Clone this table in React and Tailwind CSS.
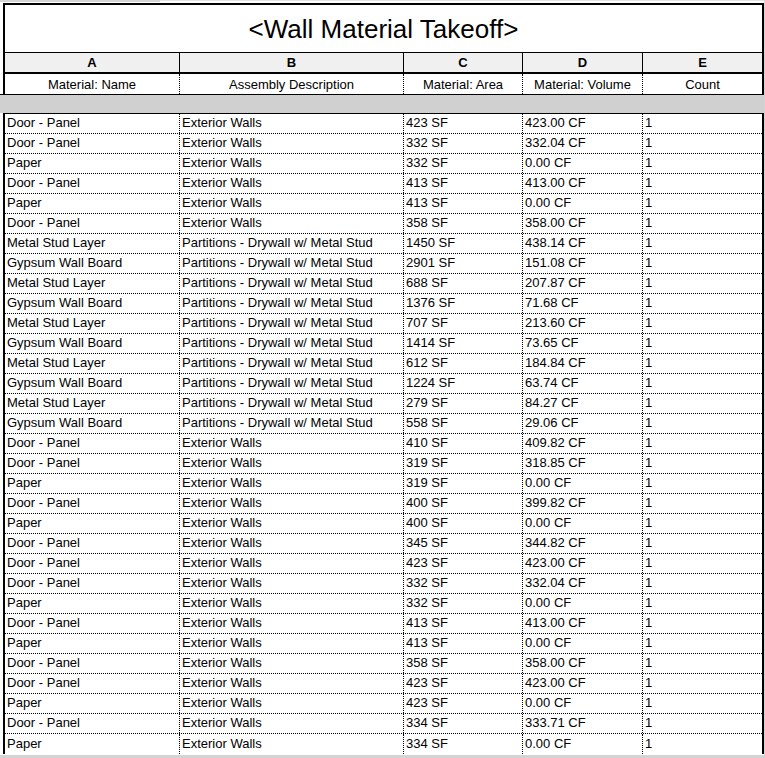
const rows = [
  ["Door - Panel", "Exterior Walls", "423 SF", "423.00 CF"],
  ["Door - Panel", "Exterior Walls", "332 SF", "332.04 CF"],
  ["Paper", "Exterior Walls", "332 SF", "0.00 CF"],
  ["Door - Panel", "Exterior Walls", "413 SF", "413.00 CF"],
  ["Paper", "Exterior Walls", "413 SF", "0.00 CF"],
  ["Door - Panel", "Exterior Walls", "358 SF", "358.00 CF"],
  ["Metal Stud Layer", "Partitions - Drywall w/ Metal Stud", "1450 SF", "438.14 CF"],
  ["Gypsum Wall Board", "Partitions - Drywall w/ Metal Stud", "2901 SF", "151.08 CF"],
  ["Metal Stud Layer", "Partitions - Drywall w/ Metal Stud", "688 SF", "207.87 CF"],
  ["Gypsum Wall Board", "Partitions - Drywall w/ Metal Stud", "1376 SF", "71.68 CF"],
  ["Metal Stud Layer", "Partitions - Drywall w/ Metal Stud", "707 SF", "213.60 CF"],
  ["Gypsum Wall Board", "Partitions - Drywall w/ Metal Stud", "1414 SF", "73.65 CF"],
  ["Metal Stud Layer", "Partitions - Drywall w/ Metal Stud", "612 SF", "184.84 CF"],
  ["Gypsum Wall Board", "Partitions - Drywall w/ Metal Stud", "1224 SF", "63.74 CF"],
  ["Metal Stud Layer", "Partitions - Drywall w/ Metal Stud", "279 SF", "84.27 CF"],
  ["Gypsum Wall Board", "Partitions - Drywall w/ Metal Stud", "558 SF", "29.06 CF"],
  ["Door - Panel", "Exterior Walls", "410 SF", "409.82 CF"],
  ["Door - Panel", "Exterior Walls", "319 SF", "318.85 CF"],
  ["Paper", "Exterior Walls", "319 SF", "0.00 CF"],
  ["Door - Panel", "Exterior Walls", "400 SF", "399.82 CF"],
  ["Paper", "Exterior Walls", "400 SF", "0.00 CF"],
  ["Door - Panel", "Exterior Walls", "345 SF", "344.82 CF"],
  ["Door - Panel", "Exterior Walls", "423 SF", "423.00 CF"],
  ["Door - Panel", "Exterior Walls", "332 SF", "332.04 CF"],
  ["Paper", "Exterior Walls", "332 SF", "0.00 CF"],
  ["Door - Panel", "Exterior Walls", "413 SF", "413.00 CF"],
  ["Paper", "Exterior Walls", "413 SF", "0.00 CF"],
  ["Door - Panel", "Exterior Walls", "358 SF", "358.00 CF"],
  ["Door - Panel", "Exterior Walls", "423 SF", "423.00 CF"],
  ["Paper", "Exterior Walls", "423 SF", "0.00 CF"],
  ["Door - Panel", "Exterior Walls", "334 SF", "333.71 CF"],
  ["Paper", "Exterior Walls", "334 SF", "0.00 CF"],
];

const cols = "grid grid-cols-[175px_224px_119px_120px_119px]";

export default function App() {
  return (
    <div className="w-[765px] h-[758px] bg-[#d4d4d4] overflow-hidden font-['Liberation_Sans',Arial,sans-serif] text-[13px] leading-none text-black">
      <div className="w-[764px] bg-white pb-[1px]">
        {/* top strip */}
        <div className="flex h-[3px]">
          <div className="w-[160px] h-[2px] bg-[#d4d4d4]" />
          <div className="flex-1 h-[1px] bg-[#e4e4e4]" />
        </div>

        {/* header box */}
        <div className="ml-[3px] w-[761px] border-x-2 border-t-2 border-black">
          <div className="h-[48px] flex items-center justify-center text-[26px] border-b border-black">
            {"<Wall Material Takeoff>"}
          </div>
          <div className={`${cols} h-[21px] bg-[#f0f0f0] border-b-2 border-black font-bold`}>
            {["A", "B", "C", "D", "E"].map((l, i) => (
              <div
                key={l}
                className={`flex items-center justify-center ${i < 4 ? "border-r border-black" : ""}`}
              >
                {l}
              </div>
            ))}
          </div>
          <div className={`${cols} h-[20px]`}>
            {["Material: Name", "Assembly Description", "Material: Area", "Material: Volume", "Count"].map((l, i) => (
              <div
                key={l}
                className={`flex items-center justify-center pt-[1px] ${i < 4 ? "border-r border-dotted border-black" : ""}`}
              >
                {l}
              </div>
            ))}
          </div>
        </div>

        {/* grouping band */}
        <div className="h-[19px] bg-[#d0d0d0] border-t border-black" />

        {/* data box */}
        <div className="ml-[3px] w-[761px] border-x-2 border-t border-black">
          {rows.map((r, ri) => (
            <div
              key={ri}
              className={`${cols} h-[20px] ${ri < rows.length - 1 ? "border-b border-dotted border-black" : ""}`}
            >
              {[...r, "1"].map((c, ci) => (
                <div
                  key={ci}
                  className={`flex items-center pl-[2px] pb-[2px] whitespace-nowrap overflow-hidden ${ci < 4 ? "border-r border-dotted border-black" : ""}`}
                >
                  {c}
                </div>
              ))}
            </div>
          ))}
        </div>
      </div>
    </div>
  );
}
